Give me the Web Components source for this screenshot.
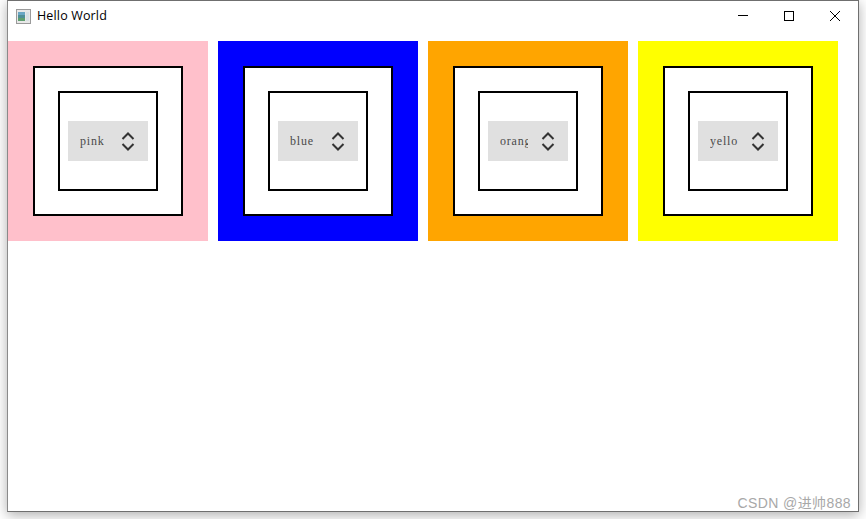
<!DOCTYPE html>
<html>
<head>
<meta charset="utf-8">
<title>Hello World</title>
<style>
  html, body { margin: 0; height: 100%; overflow: hidden; }
  body {
    background: #fff;
    width: 866px;
    height: 519px;
  }
</style>
</head>
<body>
<desktop-window>
  <color-card color="pink" label="pink"></color-card>
  <color-card color="blue" label="blue"></color-card>
  <color-card color="orange" label="orange"></color-card>
  <color-card color="yellow" label="yellow"></color-card>
</desktop-window>

<script>
class TitleBar extends HTMLElement {
  constructor () {
    super()
    this.shadow = this.attachShadow({ mode: 'open' })
  }

  connectedCallback () {
    this.shadow.innerHTML =
      /* html */`
      <style>
        :host {
          align-items: center;
          display: flex;
          height: 30px;
          padding-left: 8px;
          font-family: 'Open Sans', 'Noto Sans', sans-serif;
          font-size: 12.5px;
          color: #000;
        }

        .app-icon {
          height: 15px;
          margin-right: 6px;
          width: 15px;
        }

        .title {
          flex: 1;
          letter-spacing: 0.15px;
          position: relative;
          top: -1px;
        }

        .controls {
          display: flex;
          margin-right: -1px;
        }

        .controls svg {
          display: block;
          height: 30px;
          width: 46px;
        }
      </style>

      <svg class="app-icon" viewBox="0 0 15 15">
        <rect x="0.5" y="0.5" width="14" height="14" fill="#e8e8e8" stroke="#9a9a9a"/>
        <rect x="2" y="3" width="7" height="9" fill="#4f8f97"/>
        <rect x="2" y="3" width="7" height="3" fill="#6aa7c4"/>
        <rect x="2" y="9" width="7" height="3" fill="#5f9f6f"/>
        <rect x="10" y="3" width="3" height="9" fill="#d8e0e4"/>
      </svg>
      <span class="title">Hello World</span>
      <div class="controls">
        <svg viewBox="0 0 46 30"><path d="M17 14.5h10" stroke="#000" fill="none"/></svg>
        <svg viewBox="0 0 46 30"><rect x="17.5" y="10.5" width="9" height="9" stroke="#000" fill="none"/></svg>
        <svg viewBox="0 0 46 30"><path d="M17 10l10 10M27 10l-10 10" stroke="#000" fill="none"/></svg>
      </div>
    `
  }
}

class ComboBox extends HTMLElement {
  constructor () {
    super()
    this.shadow = this.attachShadow({ mode: 'open' })
  }

  connectedCallback () {
    this.shadow.innerHTML =
      /* html */`
      <style>
        :host {
          align-items: center;
          background-color: #e0e0e0;
          box-sizing: border-box;
          display: flex;
          height: 40px;
          padding-left: 12px;
          width: 80px;
        }

        .text {
          color: #4a4a4a;
          font-family: 'Liberation Serif', 'DejaVu Serif', serif;
          font-size: 12px;
          letter-spacing: 0.8px;
          overflow: hidden;
          white-space: nowrap;
          width: 28px;
        }

        svg {
          height: 20px;
          margin-left: 12px;
          width: 16px;
        }
      </style>

      <span class="text">${this.getAttribute('label')}</span>
      <svg viewBox="0 0 16 20">
        <path d="M2.5 8l5.5-5.5 5.5 5.5M2.5 13l5.5 5.5 5.5-5.5" fill="none" stroke="#333" stroke-width="2"/>
      </svg>
    `
  }
}

class ColorCard extends HTMLElement {
  constructor () {
    super()
    this.shadow = this.attachShadow({ mode: 'open' })
  }

  connectedCallback () {
    this.shadow.innerHTML =
      /* html */`
      <style>
        :host {
          align-items: center;
          background-color: ${this.getAttribute('color')};
          display: flex;
          flex: none;
          height: 200px;
          justify-content: center;
          width: 200px;
        }

        .frame {
          align-items: center;
          background-color: #fff;
          border: 2px solid #000;
          box-sizing: border-box;
          display: flex;
          justify-content: center;
        }

        .outer {
          height: 150px;
          width: 150px;
        }

        .inner {
          height: 100px;
          width: 100px;
        }
      </style>

      <div class="frame outer">
        <div class="frame inner">
          <combo-box label="${this.getAttribute('label')}"></combo-box>
        </div>
      </div>
    `
  }
}

class DesktopWindow extends HTMLElement {
  constructor () {
    super()
    this.shadow = this.attachShadow({ mode: 'open' })
  }

  connectedCallback () {
    this.shadow.innerHTML =
      /* html */`
      <style>
        :host {
          background: #fff;
          border: 1px solid #6f6f6f;
          border-left-color: #8a8a8a;
          box-shadow: 0 3px 12px rgba(0, 0, 0, 0.32);
          box-sizing: border-box;
          display: block;
          height: 512px;
          margin-left: 7px;
          position: relative;
          width: 852px;
        }

        .content {
          display: flex;
          gap: 10px;
          padding-top: 10px;
        }

        .watermark {
          bottom: -1px;
          color: #a8a8a8;
          font-family: 'Liberation Sans', 'Noto Sans CJK SC', sans-serif;
          font-size: 14px;
          letter-spacing: 0.4px;
          position: absolute;
          right: 7px;
        }
      </style>

      <title-bar></title-bar>
      <div class="content"><slot></slot></div>
      <span class="watermark">CSDN @进帅888</span>
    `
  }
}

customElements.define('title-bar', TitleBar)
customElements.define('combo-box', ComboBox)
customElements.define('color-card', ColorCard)
customElements.define('desktop-window', DesktopWindow)
</script>
</body>
</html>
